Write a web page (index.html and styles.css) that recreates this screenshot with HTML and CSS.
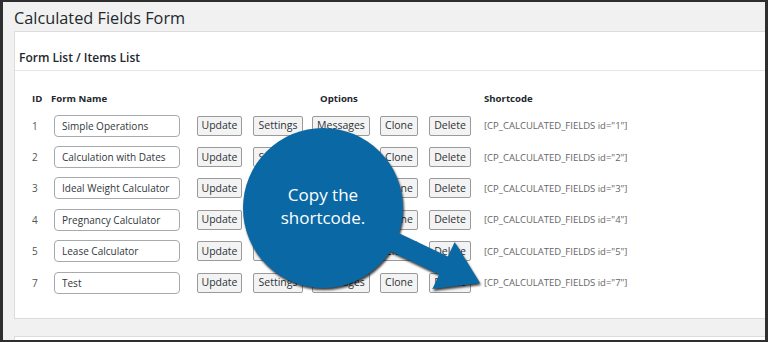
FILE: index.html
```html
<!DOCTYPE html>
<html>
<head>
<meta charset="utf-8">
<link rel="stylesheet" href="styles.css">
</head>
<body>
<div class="frame">
  <h1 class="title">Calculated Fields Form</h1>
  <section class="panel">
    <h2 class="panel-head">Form List / Items List</h2>
    <div class="grid">
      <div class="th">ID</div>
      <div class="th">Form Name</div>
      <div class="th opts">Options</div>
      <div class="th">Shortcode</div>

      <div class="id">1</div>
      <div class="name"><input class="field" value="Simple Operations"></div>
      <div><button class="btn b-upd">Update</button></div>
      <div><button class="btn b-set">Settings</button></div>
      <div><button class="btn b-msg">Messages</button></div>
      <div><button class="btn b-cln">Clone</button></div>
      <div><button class="btn b-del">Delete</button></div>
      <div class="code">[CP_CALCULATED_FIELDS id="1"]</div>

      <div class="id">2</div>
      <div class="name"><input class="field" value="Calculation with Dates"></div>
      <div><button class="btn b-upd">Update</button></div>
      <div><button class="btn b-set">Settings</button></div>
      <div><button class="btn b-msg">Messages</button></div>
      <div><button class="btn b-cln">Clone</button></div>
      <div><button class="btn b-del">Delete</button></div>
      <div class="code">[CP_CALCULATED_FIELDS id="2"]</div>

      <div class="id">3</div>
      <div class="name"><input class="field" value="Ideal Weight Calculator"></div>
      <div><button class="btn b-upd">Update</button></div>
      <div><button class="btn b-set">Settings</button></div>
      <div><button class="btn b-msg">Messages</button></div>
      <div><button class="btn b-cln">Clone</button></div>
      <div><button class="btn b-del">Delete</button></div>
      <div class="code">[CP_CALCULATED_FIELDS id="3"]</div>

      <div class="id">4</div>
      <div class="name"><input class="field" value="Pregnancy Calculator"></div>
      <div><button class="btn b-upd">Update</button></div>
      <div><button class="btn b-set">Settings</button></div>
      <div><button class="btn b-msg">Messages</button></div>
      <div><button class="btn b-cln">Clone</button></div>
      <div><button class="btn b-del">Delete</button></div>
      <div class="code">[CP_CALCULATED_FIELDS id="4"]</div>

      <div class="id">5</div>
      <div class="name"><input class="field" value="Lease Calculator"></div>
      <div><button class="btn b-upd">Update</button></div>
      <div><button class="btn b-set">Settings</button></div>
      <div><button class="btn b-msg">Messages</button></div>
      <div><button class="btn b-cln">Clone</button></div>
      <div><button class="btn b-del">Delete</button></div>
      <div class="code">[CP_CALCULATED_FIELDS id="5"]</div>

      <div class="id">7</div>
      <div class="name"><input class="field" value="Test"></div>
      <div><button class="btn b-upd">Update</button></div>
      <div><button class="btn b-set">Settings</button></div>
      <div><button class="btn b-msg">Messages</button></div>
      <div><button class="btn b-cln">Clone</button></div>
      <div><button class="btn b-del">Delete</button></div>
      <div class="code">[CP_CALCULATED_FIELDS id="7"]</div>
    </div>
  </section>
  <section class="panel panel-2"></section>

  <svg class="callout" width="768" height="342" viewBox="0 0 768 342">
    <g class="callout-shape">
      <circle cx="323" cy="208" r="80"/>
      <polygon points="327.3,199 447.8,256.5 454.7,242 480,283 432.3,289 439.2,274.5 318.7,217"/>
    </g>
  </svg>
  <div class="callout-text">Copy the<br>shortcode.</div>
</div>
</body>
</html>
```
FILE: styles.css
```css
* { box-sizing: border-box; }
html, body { margin: 0; padding: 0; }
body {
  width: 768px;
  height: 342px;
  overflow: hidden;
  font-family: "Open Sans", "Noto Sans", sans-serif;
  color: #23282d;
}
.frame {
  position: relative;
  width: 768px;
  height: 342px;
  background: #f1f1f1;
  border: 2px solid #2e2e2e;
  border-left-width: 3px;
  border-right-width: 3px;
  overflow: hidden;
}
.title {
  margin: 0;
  padding: 4px 0 0 11px;
  height: 29px;
  font-size: 16.3px;
  font-weight: 400;
  line-height: 24px;
  color: #23282d;
}
.panel {
  margin-left: 11px;
  background: #fff;
  border: 1px solid #dcdcde;
  border-right: none;
  height: 288px;
}
.panel-head {
  margin: 0;
  padding: 17px 0 3px 4px;
  font-size: 12px;
  font-weight: 600;
  line-height: 18px;
  border-bottom: 1px solid #e3e6ea;
}
.grid {
  display: grid;
  grid-template-columns: 19px 146px 56px 59px 68px 49px 55px auto;
  grid-template-rows: 24px;
  grid-auto-rows: 31.4px;
  align-items: center;
  margin: 15px 0 0 17px;
}
.th {
  font-size: 9.6px;
  font-weight: 700;
  color: #23282d;
  white-space: nowrap;
}
.th.opts {
  grid-column: 3 / 8;
  text-align: center;
  padding-right: 3px;
}
.id {
  font-size: 10px;
  color: #555;
}
.name { padding-left: 3px; }
.field {
  display: block;
  width: 126px;
  height: 22px;
  border: 1px solid #a7aaad;
  border-radius: 4px;
  padding: 0 0 0 7px;
  font-family: inherit;
  font-size: 10px;
  color: #32373c;
  background: #fff;
  outline: none;
}
.btn {
  display: block;
  height: 20px;
  padding: 0;
  border: 1px solid #9a9a9a;
  border-radius: 2px;
  background: #f3f3f3;
  font-family: inherit;
  font-size: 10.5px;
  color: #2c3338;
  text-align: center;
  line-height: 17px;
}
.b-upd { width: 45px; }
.b-set { width: 50px; }
.b-msg { width: 58px; }
.b-cln { width: 38px; }
.b-del { width: 42px; }
.code {
  font-size: 9.5px;
  color: #666;
  white-space: nowrap;
}
.panel-2 {
  margin-top: 17px;
  height: 20px;
}
.callout {
  position: absolute;
  left: -3px;
  top: -2px;
  pointer-events: none;
}
.callout-shape {
  fill: #0a69a5;
  filter: drop-shadow(1.5px 2px 0.8px rgba(0,0,0,0.75));
}
.callout-text {
  position: absolute;
  left: 240px;
  top: 181px;
  width: 160px;
  text-align: center;
  color: #fff;
  font-size: 17px;
  line-height: 23px;
}
```
